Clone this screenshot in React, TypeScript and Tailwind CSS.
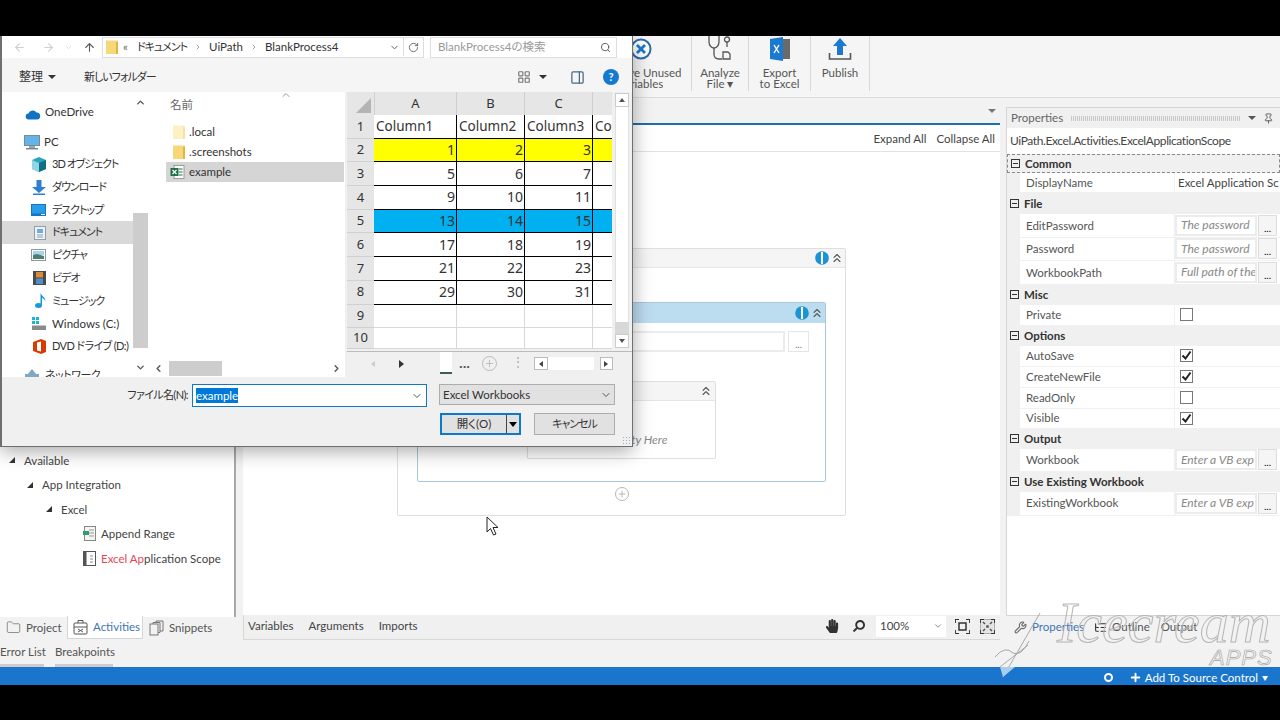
import React from 'react';
import {
  ArrowLeft, ArrowRight, ArrowUp, ChevronDown, ChevronUp, ChevronLeft, ChevronRight, ChevronsUp,
  RotateCw, Search, Folder, Wrench, Plus, Pin, PanelRight, LayoutGrid, ListTree,
} from 'lucide-react';
import { FaHandPaper, FaSearch } from 'react-icons/fa';

const FolderIcon = ({ light = false }: { light?: boolean }) => (
  <svg width="14" height="14" viewBox="0 0 14 14" className="shrink-0">
    <rect x="1" y="0.5" width="12" height="13.5" fill={light ? '#fdf0c4' : '#f6d878'} />
    <rect x="11" y="2" width="2" height="12" fill={light ? '#f4e2a6' : '#e0b545'} />
  </svg>
);

const ExcelIcon = () => (
  <svg width="15" height="14" viewBox="0 0 15 14" className="shrink-0">
    <rect x="4" y="0.5" width="10" height="13" fill="#fff" stroke="#9a9a9a" />
    <path d="M9 4h3.5M9 7h3.5M9 10h3.5" stroke="#1e7145" />
    <rect x="0.5" y="3" width="8" height="8" fill="#1e7145" />
    <path d="M2.5 5l4 4M6.5 5l-4 4" stroke="#fff" strokeWidth="1.2" />
  </svg>
);

const NavIcon = ({ kind }: { kind: string }) => {
  if (kind === 'cloud')
    return (
      <svg width="16" height="11" viewBox="0 0 16 11"><path d="M4 10.5a3 3 0 0 1-.6-6A4.5 4.5 0 0 1 11.5 3.6 3.5 3.5 0 0 1 12.5 10.5z" fill="#0f72c4" /></svg>
    );
  if (kind === 'pc')
    return (
      <svg width="16" height="15" viewBox="0 0 16 15"><rect x="0.5" y="0.5" width="15" height="10" fill="#63b3e8" stroke="#7a8a96" /><rect x="5" y="11" width="6" height="2" fill="#9aa5ad" /><rect x="2" y="13" width="12" height="1.5" fill="#7a8a96" /></svg>
    );
  if (kind === '3d')
    return (
      <svg width="14" height="15" viewBox="0 0 14 15"><path d="M7 0l7 3v9l-7 3-7-3V3z" fill="#2aa5bd" /><path d="M7 6l7-3v9l-7 3z" fill="#0f6f86" /><path d="M0 3l7 3v9l-7-3z" fill="#8fd6e4" /></svg>
    );
  if (kind === 'down')
    return (
      <svg width="14" height="15" viewBox="0 0 14 15"><path d="M4.5 0h5v7H14l-7 6-7-6h4.500z" fill="#2f7fd1" /><rect x="1" y="13.500" width="12" height="1.500" fill="#2f7fd1" /></svg>
    );
  if (kind === 'desk')
    return (
      <svg width="15" height="12" viewBox="0 0 15 12"><rect width="15" height="12" fill="#0f76c9" /><rect x="1" y="1" width="13" height="8.500" fill="#2a9be6" /><rect x="10" y="10" width="4" height="1" fill="#fff" /></svg>
    );
  if (kind === 'doc')
    return (
      <svg width="12" height="14" viewBox="0 0 12 14"><rect x="0.500" y="0.500" width="11" height="13" fill="#eef2f5" stroke="#8fa0ac" /><rect x="3" y="3" width="6" height="4" fill="#6aaedb" /><path d="M3 9h6M3 11h6" stroke="#8fa0ac" /></svg>
    );
  if (kind === 'pic')
    return (
      <svg width="15" height="12" viewBox="0 0 15 12"><rect x="0.500" y="0.500" width="14" height="11" fill="#fff" stroke="#8a9aa5" /><rect x="2" y="2" width="11" height="4" fill="#a9d4ee" /><path d="M2 6l4-1 7 2v3H2z" fill="#4f7f6a" /></svg>
    );
  if (kind === 'vid')
    return (
      <svg width="13" height="14" viewBox="0 0 13 14"><rect width="13" height="14" fill="#4a4a4a" /><rect x="3" y="1" width="7" height="5.500" fill="#d98a3a" /><rect x="3" y="7.500" width="7" height="5.500" fill="#4f8fc9" /></svg>
    );
  if (kind === 'music')
    return (
      <svg width="11" height="15" viewBox="0 0 11 15"><ellipse cx="3.500" cy="12.500" rx="3.500" ry="2.500" fill="#1b9ad6" /><path d="M5.500 12V0c1 3 5 4 5 8-1-2-3-3-3.500-3v7z" fill="#1b9ad6" /></svg>
    );
  if (kind === 'win')
    return (
      <svg width="14" height="13" viewBox="0 0 14 13"><rect x="0" y="0" width="3" height="3" fill="#19b5d8" /><rect x="4" y="0" width="3" height="3" fill="#19b5d8" /><rect x="0" y="4" width="3" height="3" fill="#19b5d8" /><rect x="4" y="4" width="3" height="3" fill="#19b5d8" /><rect x="0" y="8.500" width="14" height="4.500" fill="#8a8a8a" /></svg>
    );
  if (kind === 'dvd')
    return (
      <svg width="13" height="15" viewBox="0 0 13 15"><path d="M0 3l8-3 5 2v11l-5 2-8-3z" fill="#d83b01" /><path d="M8 2.500L4 3.500v8l4 1z" fill="#fff" /></svg>
    );
  return (
    <svg width="16" height="13" viewBox="0 0 16 13"><path d="M8 0l4 5h3v6H1V5h3z" fill="#7fa7c4" /></svg>
  );
};

const FitIcon = ({ dots = false }: { dots?: boolean }) => (
  <svg width="15" height="15" viewBox="0 0 15 15">
    <rect x="0" y="0" width="15" height="15" fill={dots ? '#e4e4e4' : 'none'} stroke={dots ? '#777' : 'none'} />
    <path d="M0 4V0h4M11 0h4v4M15 11v4h-4M4 15H0v-4" fill="none" stroke="#333" strokeWidth="1.800" />
    {dots
      ? <path d="M3 3l2 2M12 3l-2 2M3 12l2-2M12 12l-2-2M7 7h1v1H7z" stroke="#555" strokeWidth="1.500" />
      : <rect x="4" y="4" width="7" height="7" fill="none" stroke="#333" strokeWidth="1.500" />}
  </svg>
);

const navItems = [
  { kind: '3d', label: '3D オブジェクト', cls: 'text-[11px] tracking-[-1px]' },
  { kind: 'down', label: 'ダウンロード', cls: 'text-[11px] tracking-[-1px]' },
  { kind: 'desk', label: 'デスクトップ', cls: 'text-[11px] tracking-[-1px]' },
  { kind: 'doc', label: 'ドキュメント', cls: 'text-[11px] tracking-[-1px]', selected: true },
  { kind: 'pic', label: 'ピクチャ', cls: 'text-[11px] tracking-[-1px]' },
  { kind: 'vid', label: 'ビデオ', cls: 'text-[11px] tracking-[-1px]' },
  { kind: 'music', label: 'ミュージック', cls: 'text-[11px] tracking-[-1px]' },
  { kind: 'win', label: 'Windows (C:)', cls: 'text-[11.5px]' },
  { kind: 'dvd', label: 'DVD ドライブ (D:)', cls: 'text-[11px] tracking-[-0.6px]' },
];

const sheetRows = [
  { n: 1, cells: ['Column1', 'Column2', 'Column3', 'Co'], head: true, bg: 'bg-white', line: 'border-black' },
  { n: 2, cells: ['1', '2', '3', ''], bg: 'bg-[#ffff00]', line: 'border-black' },
  { n: 3, cells: ['5', '6', '7', ''], bg: 'bg-white', line: 'border-black' },
  { n: 4, cells: ['9', '10', '11', ''], bg: 'bg-white', line: 'border-black' },
  { n: 5, cells: ['13', '14', '15', ''], bg: 'bg-[#00b0f0]', line: 'border-black' },
  { n: 6, cells: ['17', '18', '19', ''], bg: 'bg-white', line: 'border-black' },
  { n: 7, cells: ['21', '22', '23', ''], bg: 'bg-white', line: 'border-black' },
  { n: 8, cells: ['29', '30', '31', ''], bg: 'bg-white', line: 'border-black' },
  { n: 9, cells: ['', '', '', ''], bg: 'bg-white', line: 'border-[#d8d8d8]', empty: true },
  { n: 10, cells: ['', '', '', ''], bg: 'bg-white', line: 'border-[#d8d8d8]', empty: true },
];

const ExcelSheet = () => (
  <div className="w-[285px] flex flex-col bg-[#f0f0f0] text-[14px] text-[#333] font-['Noto_Sans','Noto_Sans_CJK_JP',sans-serif]">
    <div className="flex flex-1 min-h-0">
      <div className="w-[265px]">
        <div className="grid grid-cols-[27px_82px_68px_68px_20px] h-[23px] bg-[#e6e6e6] text-[13px]">
          <div className="flex items-end justify-end pr-[3px] pb-[2px]">
            <div className="w-0 h-0 border-l-[15px] border-l-transparent border-b-[15px] border-b-[#b4b4b4]" />
          </div>
          {['A', 'B', 'C', ''].map((c, i) => (
            <div key={i} className="flex items-center justify-center border-l border-[#cfcfcf]">{c}</div>
          ))}
        </div>
        {sheetRows.map((r) => (
          <div key={r.n} className={`grid grid-cols-[27px_82px_68px_68px_20px] ${r.n === 10 ? 'h-[21px]' : 'h-[23.7px]'}`}>
            <div className="bg-[#e6e6e6] flex items-center justify-center text-[13px] border-b border-[#d0d0d0]">{r.n}</div>
            {r.cells.map((c, i) => (
              <div
                key={i}
                className={`${r.bg} ${r.line} border-b flex items-center overflow-hidden leading-none ${i > 0 ? 'border-l' : ''} ${r.head ? 'justify-start pl-[2px] text-[13.5px]' : 'justify-end pr-[1px]'}`}
              >
                {c}
              </div>
            ))}
          </div>
        ))}
      </div>
      <div className="ml-[3px] w-[14px] flex flex-col items-center pt-[1px] bg-[#eeeeee] h-[256px]">
        <div className="w-[14px] h-[14px] bg-white border border-[#cccccc] flex items-center justify-center"><div className="w-0 h-0 border-x-[3px] border-x-transparent border-b-[4px] border-b-[#555]" /></div>
        <div className="w-[14px] flex-1 bg-white border-x border-[#e0e0e0]" />
        <div className="w-[14px] h-[12px] bg-[#d8d8d8]" />
        <div className="w-[14px] h-[14px] bg-white border border-[#cccccc] flex items-center justify-center"><div className="w-0 h-0 border-x-[3px] border-x-transparent border-t-[4px] border-t-[#555]" /></div>
      </div>
    </div>
    <div className="h-[26px] flex items-start text-[#555] shrink-0 border-t border-[#bbbbbb]">
      <div className="w-[24px]" />
      <span className="w-0 h-0 mt-[9px] border-y-[3px] border-y-transparent border-r-[4px] border-r-[#cccccc]" />
      <span className="w-0 h-0 ml-[24px] mt-[8px] border-y-[4px] border-y-transparent border-l-[5px] border-l-[#333]" />
      <div className="ml-[36px] w-[12px] h-[22px] bg-white border-b-2 border-[#3f5f4f]" />
      <span className="ml-[7px] mt-[1px] text-[13px] font-bold leading-[20px]">...</span>
      <div className="ml-[12px] mt-[4px] w-[15px] h-[15px] rounded-full border border-[#bbbbbb] flex items-center justify-center"><Plus size={11} className="text-[#bbbbbb]" /></div>
      <span className="ml-[15px] mt-[2px] text-[#aaa] leading-[16px] text-[12px]">⋮</span>
      <div className="ml-[10px] mt-[5px] w-[14px] h-[13px] border border-[#bbb] bg-white flex items-center justify-center"><span className="w-0 h-0 border-y-[3px] border-y-transparent border-r-[4px] border-r-[#444]" /></div>
      <div className="mt-[5px] w-[46px] h-[13px] bg-white" />
      <div className="ml-[6px] mt-[5px] w-[13px] h-[13px] border border-[#bbb] bg-white flex items-center justify-center"><span className="w-0 h-0 border-y-[3px] border-y-transparent border-l-[4px] border-l-[#444]" /></div>
    </div>
  </div>
);

const FileDialog = () => (
  <div className="absolute left-0 top-[36px] z-10 w-[633px] h-[411px] bg-[#f0f0f0] border-l-2 border-r border-b border-[#6f6f6f] shadow-[0_4px_18px_rgba(0,0,0,0.35)] flex flex-col text-[11.5px] text-[#333] [font-feature-settings:'palt']">
    <div className="h-[22px] flex items-center bg-white shrink-0">
      <ArrowLeft size={13} className="ml-[11px] text-[#d0d0d0]" />
      <ArrowRight size={13} className="ml-[16px] text-[#d0d0d0]" />
      <ChevronDown size={9} className="ml-[9px] text-[#d0d0d0]" />
      <ArrowUp size={13} className="ml-[10px] text-[#555]" />
      <div className="ml-[6px] w-[322px] h-[21px] flex items-center border border-[#dddddd]">
        <span className="ml-[2px]"><FolderIcon /></span>
        <span className="ml-[4px] text-[#666]">«</span>
        <span className="ml-[9px] text-[11px] tracking-[-1px]">ドキュメント</span>
        <ChevronRight size={8} className="mx-[7px] text-[#777]" />
        <span>UiPath</span>
        <ChevronRight size={8} className="mx-[7px] text-[#777]" />
        <span>BlankProcess4</span>
        <ChevronDown size={11} className="ml-auto mr-[1px] text-[#555]" />
        <span className="w-px h-[18px] bg-[#dddddd] ml-[2px]" />
        <RotateCw size={11} className="mx-[4px] text-[#666]" />
      </div>
      <div className="ml-[6px] w-[187px] h-[21px] flex items-center border border-[#dddddd] pl-[7px] text-[#999]">
        BlankProcess4の検索
        <Search size={11} className="ml-auto mr-[5px] text-[#555]" />
      </div>
    </div>
    <div className="h-[34px] flex items-center shrink-0 pt-[4px] bg-[#f5f5f5] whitespace-nowrap">
      <span className="ml-[17px] shrink-0 text-[12px]">整理</span>
      <span className="ml-[5px] w-0 h-0 border-x-[4px] border-x-transparent border-t-[4px] border-t-[#333]" />
      <span className="ml-[28px] shrink-0 text-[11px] tracking-[-1px]">新しいフォルダー</span>
      <LayoutGrid size={14} className="ml-auto text-[#777]" />
      <span className="ml-[8px] w-0 h-0 border-x-[4px] border-x-transparent border-t-[4px] border-t-[#333]" />
      <PanelRight size={15} className="ml-[23px] text-[#4a6a85]" />
      <div className="ml-[18px] mr-[13px] w-[16px] h-[16px] rounded-full bg-[#1479d0] text-white flex items-center justify-center text-[11px] font-bold">?</div>
    </div>
    <div className="h-[285px] flex shrink-0 bg-white overflow-hidden">
      <div className="w-[131px] shrink-0 overflow-hidden relative">
        <div className="h-[29px] flex items-end pl-[23px] gap-[3px] pb-[1px]"><NavIcon kind="cloud" /><span className="ml-[1px]">OneDrive</span></div>
        <div className="h-[29px] flex items-end pl-[22px] gap-[4px] mb-[3px]"><NavIcon kind="pc" /><span>PC</span></div>
        {navItems.map((n) => (
          <div key={n.label} className={`h-[22.75px] flex items-center ${n.selected ? 'bg-[#d9d9d9]' : ''}`}>
            <span className="w-[44px] flex justify-end shrink-0"><NavIcon kind={n.kind} /></span>
            <span className={`ml-[6px] whitespace-nowrap ${n.cls}`}>{n.label}</span>
          </div>
        ))}
        <div className="mt-[9px] flex items-center pl-[22px] gap-[5px] text-[11px] tracking-[-0.5px]"><NavIcon kind="net" /><span>ネットワーク</span></div>
      </div>
      <div className="w-[15px] shrink-0 flex flex-col items-center bg-white">
        <ChevronUp size={11} strokeWidth={3} className="mt-[5px] text-[#555]" />
        <div className="w-[15px] h-[135px] mt-[105px] bg-[#cdcdcd]" />
        <ChevronDown size={11} strokeWidth={3} className="mt-[14px] text-[#555]" />
      </div>
      <div className="w-[197px] shrink-0 flex flex-col">
        <div className="h-[30px] relative pl-[22px] pt-[4px] text-[#666]">
          名前
          <ChevronUp size={12} className="absolute left-[132px] -top-[3px] text-[#999]" />
        </div>
        <div className="h-[20px] flex items-center pl-[24px] gap-[3px]"><FolderIcon light /><span>.local</span></div>
        <div className="h-[20px] flex items-center pl-[24px] gap-[3px]"><FolderIcon /><span>.screenshots</span></div>
        <div className="h-[20px] ml-[18px] mr-[1px] pl-[4px] flex items-center gap-[4px] bg-[#d5d5d5]"><ExcelIcon /><span>example</span></div>
        <div className="flex-1" />
        <div className="h-[16px] flex items-center pl-[5px] mb-[1px]">
          <ChevronLeft size={11} strokeWidth={3} className="text-[#555]" />
          <div className="ml-[5px] w-[53px] h-[15px] bg-[#cdcdcd]" />
          <ChevronRight size={11} strokeWidth={3} className="ml-[109px] text-[#555]" />
        </div>
      </div>
      <div className="w-[2px] bg-[#f0f0f0]" />
      <ExcelSheet />
    </div>
    <div className="flex-1 relative">
      <div className="flex items-start pt-[7px]">
        <span className="w-[186px] text-right mt-[3px] whitespace-nowrap text-[11px] tracking-[-0.6px]">ファイル名(N):</span>
        <div className="ml-[4px] w-[235px] h-[23px] bg-white border border-[#0f78c8] flex items-center pl-[3px]">
          <span className="bg-[#0078d7] text-white leading-[15px]">example</span>
          <ChevronDown size={12} className="ml-auto mr-[3px] text-[#555]" />
        </div>
        <div className="ml-[12px] w-[176px] h-[21px] bg-[#e1e1e1] border border-[#adadad] flex items-center pl-[3px]">
          Excel Workbooks
          <ChevronDown size={12} className="ml-auto mr-[2px] text-[#555]" />
        </div>
      </div>
      <div className="flex pl-[438px] mt-[6px]">
        <div className="w-[81px] h-[22px] bg-[#e1e1e1] border-2 border-[#0f78c8] flex items-center">
          <span className="flex-1 text-center">開く(O)</span>
          <span className="w-px h-[18px] bg-[#444]" />
          <span className="mx-[2px] w-0 h-0 border-x-[4px] border-x-transparent border-t-[5px] border-t-black" />
        </div>
        <div className="ml-[13px] w-[81px] h-[22px] bg-[#e1e1e1] border border-[#adadad] flex items-center justify-center text-[11px] tracking-[-1px]">キャンセル</div>
      </div>
      <div className="absolute right-[2px] bottom-[2px] w-[8px] h-[8px] bg-[radial-gradient(#aaaaaa_1px,transparent_1px)] bg-[length:3px_3px]" />
    </div>
  </div>
);

const RibbonItem = ({ w, icon, lines, sep = true }: { w: string; icon: React.ReactNode; lines: string[]; sep?: boolean }) => (
  <div className={`${w} h-[55px] flex flex-col items-center shrink-0 ${sep ? 'border-r border-[#d8d8d8]' : ''}`}>
    <div className="h-[26px] flex items-center justify-center">{icon}</div>
    <div className="mt-[6px] text-center leading-[10.5px] text-[11.5px] text-[#555]">
      {lines.map((l) => <div key={l} className="whitespace-nowrap">{l}</div>)}
    </div>
  </div>
);

const Ribbon = () => (
  <div className="h-[62px] shrink-0 bg-[#f5f5f5] border-b border-[#dcdcdc] flex items-start pl-[590px]">
    <RibbonItem
      w="w-[102px]"
      lines={['Remove Unused', 'Variables']}
      icon={
        <svg width="22" height="24" viewBox="0 0 22 24"><circle cx="11" cy="12" r="9.500" fill="#fff" stroke="#2b6cb0" strokeWidth="2" /><path d="M7 8l8 8M15 8l-8 8" stroke="#1b79d0" strokeWidth="2.800" /></svg>
      }
    />
    <RibbonItem
      w="w-[57px]"
      lines={['Analyze', 'File ▾']}
      icon={
        <svg width="26" height="26" viewBox="0 0 26 26" fill="none" stroke="#555" strokeWidth="1.300"><path d="M2 0v6c0 4 3 6 5 6s5-2 5-6V0" /><path d="M7 12v6c0 3 2 5 5 5h3" /><circle cx="20" cy="3.500" r="2.500" /><path d="M20 6v5" /><path d="M16 23v-7h5l2 2v5z" /></svg>
      }
    />
    <RibbonItem
      w="w-[62px]"
      lines={['Export', 'to Excel']}
      icon={
        <svg width="20" height="24" viewBox="0 0 20 24"><rect x="13" y="2" width="7" height="20" fill="#6a6a6a" /><path d="M0 2l13-2v24L0 22z" fill="#1b79d0" /><path d="M4 8l5 8M9 8l-5 8" stroke="#fff" strokeWidth="1.400" /></svg>
      }
    />
    <RibbonItem
      w="w-[59px]"
      lines={['Publish']}
      icon={
        <svg width="24" height="24" viewBox="0 0 24 24"><path d="M12 1l7 8h-4v9H9V9H5z" fill="#1b79d0" /><path d="M1.500 16v6h21v-6" fill="none" stroke="#555" strokeWidth="1.600" /></svg>
      }
    />
  </div>
);

const LeftPanel = () => (
  <div className="w-[236px] shrink-0 flex flex-col">
    <div className="flex-1 bg-white border-r-2 border-[#a8a8a8] pt-[350px] text-[11.5px] text-[#444]">
      <div className="h-[24.500px] flex items-center pl-[9px] gap-[9px]"><span className="w-0 h-0 border-l-[6px] border-l-transparent border-b-[6px] border-b-[#333]" /><span>Available</span></div>
      <div className="h-[24.500px] flex items-center pl-[27px] gap-[9px]"><span className="w-0 h-0 border-l-[6px] border-l-transparent border-b-[6px] border-b-[#333]" /><span>App Integration</span></div>
      <div className="h-[24.500px] flex items-center pl-[46px] gap-[9px]"><span className="w-0 h-0 border-l-[6px] border-l-transparent border-b-[6px] border-b-[#333]" /><span>Excel</span></div>
      <div className="h-[24.500px] flex items-center pl-[83px] gap-[5px]">
        <svg width="13" height="15" viewBox="0 0 13 15"><rect x="1.500" y="0.500" width="11" height="14" fill="#f4f4f4" stroke="#888" /><path d="M6 4h5M6 7h5M6 10h5" stroke="#999" /><rect x="0" y="5" width="6" height="4" fill="#2f9e6e" /></svg>
        <span>Append Range</span>
      </div>
      <div className="h-[24.500px] flex items-center pl-[83px] gap-[5px]">
        <svg width="13" height="15" viewBox="0 0 13 15"><rect x="0.500" y="0.500" width="12" height="14" fill="#fff" stroke="#555" /><rect x="0.500" y="0.500" width="3" height="14" fill="#555" /><path d="M7 5h3M7 8h3M7 11h3" stroke="#888" /></svg>
        <span><span className="text-[#e8464f]">Excel Ap</span>plication Scope</span>
      </div>
    </div>
    <div className="h-[23px] shrink-0 flex items-center pb-[2px] text-[11.5px] text-[#555]">
      <div className="h-[23px] flex items-center pl-[6px] w-[67px] gap-[5px]"><Folder size={15} strokeWidth={1} /><span>Project</span></div>
      <div className="h-[23px] flex items-center pl-[5px] w-[76px] gap-[5px] bg-white border-x border-b border-[#d5d5d5] text-[#3f74b5]">
        <svg width="15" height="16" viewBox="0 0 15 16" fill="none" stroke="#555"><rect x="1" y="4" width="13" height="11" rx="1" /><path d="M5 4V1.500h5V4M1 8h13M5 10l5 3M10 10l-5 3" /></svg>
        <span>Activities</span>
      </div>
      <div className="h-[23px] flex items-center pl-[6px] gap-[5px]">
        <svg width="15" height="16" viewBox="0 0 15 16" fill="none" stroke="#777"><rect x="1" y="4" width="8" height="11" /><path d="M4 4V2.500h7v10H9M7 2.500V1h7v10h-3" /></svg>
        <span>Snippets</span>
      </div>
    </div>
  </div>
);

const Circle = () => (
  <div className="w-[14px] h-[14px] rounded-full border border-[#b8b8b8] flex items-center justify-center"><Plus size={10} className="text-[#aaaaaa]" /></div>
);

const InfoDot = () => (
  <svg width="14" height="14" viewBox="0 0 14 14"><circle cx="7" cy="7" r="6.800" fill="#1d93d2" /><rect x="6" y="1" width="2" height="12" fill="#fff" /></svg>
);

const Canvas = () => (
  <div className="flex-1 bg-white pl-[154px] pt-[96px] text-[#777]">
    <div className="w-[449px] h-[268px] border border-[#dedede] rounded-[2px] flex flex-col">
      <div className="h-[19px] bg-[#f5f5f5] border-b border-[#e5e5e5] flex items-center justify-end pr-[1px] gap-[1px]">
        <InfoDot /><ChevronsUp size={14} className="text-[#555]" />
      </div>
      <div className="pl-[19px] pt-[34px]">
        <div className="w-[409px] h-[180px] border border-[#a9c7dc] rounded-[2px] flex flex-col">
          <div className="h-[20px] bg-[#bcdcf0] flex items-center justify-end pr-[1px] gap-[1px]">
            <InfoDot /><ChevronsUp size={14} className="text-[#555]" />
          </div>
          <div className="flex pt-[8px] pl-[180px]">
            <div className="w-[187px] h-[21px] border-2 border-[#ececec]" />
            <div className="ml-[3px] w-[21px] h-[21px] border border-[#e5e5e5] flex items-end justify-center text-[10px] leading-[14px]">...</div>
          </div>
          <div className="pl-[109px] pt-[29px]">
            <div className="w-[189px] h-[78px] border border-[#dedede] rounded-[2px]">
              <div className="h-[19px] bg-[#f5f5f5] border-b border-[#e5e5e5] flex items-center justify-end pr-[2px]"><ChevronsUp size={14} className="text-[#555]" /></div>
              <div className="pt-[30px] text-center italic text-[12px] text-[#888]">Drop Activity Here</div>
            </div>
          </div>
        </div>
        <div className="w-[409px] flex justify-center mt-[5px]"><Circle /></div>
      </div>
    </div>
  </div>
);

const Designer = () => (
  <div className="w-[757px] ml-[7px] shrink-0 flex flex-col">
    <div className="h-[25px] shrink-0 flex items-center justify-end pr-[4px]"><span className="w-0 h-0 border-x-[4px] border-x-transparent border-t-[4px] border-t-[#777]" /></div>
    <div className="h-[2px] shrink-0 bg-[#1e6ea8]" />
    <div className="h-[27px] shrink-0 bg-white border-b border-[#e2e2e2] flex items-center justify-end pr-[5px] pt-[1px] gap-[10px] text-[11.5px] text-[#444]">
      <span>Expand All</span><span>Collapse All</span>
    </div>
    <Canvas />
    <div className="h-[25px] shrink-0 border-l border-b border-[#d8d8d8] bg-[#f0f0f0] flex items-center pl-[4px] pb-[2px] text-[11.5px] text-[#444]">
      <span>Variables</span>
      <span className="ml-[15px]">Arguments</span>
      <span className="ml-[15px]">Imports</span>
      <FaHandPaper size={14} className="ml-auto text-[#333]" />
      <FaSearch size={12} className="ml-[14px] text-[#333] -scale-x-100" />
      <div className="ml-[11px] w-[70px] h-[21px] bg-white flex items-center pl-[4px]">
        100%
        <ChevronDown size={10} className="ml-auto mr-[3px] text-[#777]" />
      </div>
      <span className="ml-[9px]"><FitIcon /></span>
      <span className="ml-[10px] mr-[5px]"><FitIcon dots /></span>
    </div>
  </div>
);

type Row =
  | { type: 'group'; label: string; h: string; dashed?: boolean }
  | { type: 'text'; label: string; value: string; h: string }
  | { type: 'input'; label: string; hint: string; h: string }
  | { type: 'check'; label: string; checked: boolean; h: string };

const rows: Row[] = [
  { type: 'group', label: 'Common', h: 'h-[19px]', dashed: true },
  { type: 'text', label: 'DisplayName', value: 'Excel Application Sc', h: 'h-[20px]' },
  { type: 'group', label: 'File', h: 'h-[21px]' },
  { type: 'input', label: 'EditPassword', hint: 'The password', h: 'h-[23.500px]' },
  { type: 'input', label: 'Password', hint: 'The password', h: 'h-[23.500px]' },
  { type: 'input', label: 'WorkbookPath', hint: 'Full path of the', h: 'h-[23.500px]' },
  { type: 'group', label: 'Misc', h: 'h-[20px]' },
  { type: 'check', label: 'Private', checked: false, h: 'h-[21px]' },
  { type: 'group', label: 'Options', h: 'h-[20px]' },
  { type: 'check', label: 'AutoSave', checked: true, h: 'h-[21px]' },
  { type: 'check', label: 'CreateNewFile', checked: true, h: 'h-[21px]' },
  { type: 'check', label: 'ReadOnly', checked: false, h: 'h-[21px]' },
  { type: 'check', label: 'Visible', checked: true, h: 'h-[20px]' },
  { type: 'group', label: 'Output', h: 'h-[20px]' },
  { type: 'input', label: 'Workbook', hint: 'Enter a VB exp', h: 'h-[23px]' },
  { type: 'group', label: 'Use Existing Workbook', h: 'h-[20px]' },
  { type: 'input', label: 'ExistingWorkbook', hint: 'Enter a VB exp', h: 'h-[24px]' },
];

const PropRow = ({ row }: { row: Row }) => {
  if (row.type === 'group') {
    return (
      <div className={`${row.h} flex items-center bg-[#f0f0f0] font-bold text-[#333] ${row.dashed ? 'border border-dashed border-[#888]' : ''}`}>
        <span className="ml-[3px] w-[9px] h-[9px] border border-[#333] flex items-center justify-center shrink-0"><span className="w-[5px] h-px bg-[#333]" /></span>
        <span className="ml-[5px]">{row.label}</span>
      </div>
    );
  }
  return (
    <div className={`${row.h} flex bg-[#f0f0f0]`}>
      <div className="w-[13px] shrink-0" />
      <div className="flex-1 flex bg-white border-b border-[#f0f0f0] min-w-0">
        <div className="w-[155px] shrink-0 pl-[6px] flex items-center border-r border-[#f0f0f0] text-[#555]">{row.label}</div>
        {row.type === 'text' && <div className="pl-[3px] flex-1 min-w-0 flex items-center whitespace-nowrap overflow-hidden text-[#444]">{row.value}</div>}
        {row.type === 'check' && (
          <div className="pl-[5px] flex items-center">
            <div className="w-[13px] h-[13px] border border-[#777] flex items-center justify-center">
              {row.checked && <svg width="11" height="11" viewBox="0 0 11 11"><path d="M1.500 5.500l3 3 5-7" fill="none" stroke="#222" strokeWidth="2" /></svg>}
            </div>
          </div>
        )}
        {row.type === 'input' && (
          <div className="flex items-center">
            <div className="w-[82px] h-[21px] border-2 border-[#ececec] pl-[4px] italic text-[12px] text-[#888] flex items-center overflow-hidden whitespace-nowrap">{row.hint}</div>
            <div className="ml-[1px] w-[19px] h-[21px] border border-[#dddddd] bg-[#f5f5f5] flex items-end justify-center text-[10px] leading-[14px]">...</div>
          </div>
        )}
      </div>
    </div>
  );
};

const PropertiesPanel = () => (
  <div className="flex-1 ml-[6px] flex flex-col text-[11.5px] min-w-0">
    <div className="h-[9px] shrink-0" />
    <div className="flex-1 flex flex-col border-t border-l border-[#d5d5d5]">
      <div className="h-[20px] shrink-0 flex items-center pl-[4px] pr-[6px] text-[#666] bg-[#f0f0f0]">
        Properties
        <div className="ml-[8px] flex-1 h-[5px] bg-[repeating-linear-gradient(90deg,#c8c8c8_0,#c8c8c8_1px,transparent_1px,transparent_2px)]" />
        <span className="ml-[7px] w-0 h-0 border-x-[4px] border-x-transparent border-t-[4px] border-t-[#555]" />
        <Pin size={11} className="ml-[7px] text-[#555]" />
      </div>
      <div className="h-[26px] shrink-0 flex items-center pl-[3px] text-[12px] tracking-[-0.4px] text-[#444] bg-white">UiPath.Excel.Activities.ExcelApplicationScope</div>
      {rows.map((r) => <PropRow key={r.label} row={r} />)}
      <div className="flex-1 bg-white" />
    </div>
    <div className="h-[25px] shrink-0 flex items-center pl-[8px] pb-[2px] text-[#555] border-t border-[#d5d5d5]">
      <Wrench size={13} className="text-[#666]" />
      <span className="ml-[5px] text-[#3f74b5]">Properties</span>
      <ListTree size={13} className="ml-[10px] text-[#333]" />
      <span className="ml-[5px]">Outline</span>
      <span className="ml-[11px]">Output</span>
    </div>
  </div>
);

const Watermark = () => (
  <div className="absolute left-[995px] top-[585px] z-20 w-[285px] h-[100px] pointer-events-none">
    <svg width="285" height="100" viewBox="0 0 285 100" className="absolute inset-0">
      <path d="M8 92 L45 28 M5 82 L33 60" fill="none" stroke="#a8a8a8" />
      <path d="M0 72 Q10 60 18 68 Q26 72 34 56" fill="none" stroke="#a8a8a8" />
      <path d="M8 92 L5 82 L20 82 Z" fill="#a9cdee" />
    </svg>
    <span className="absolute left-[62px] top-[9px] italic text-[58px] leading-none text-transparent font-['Liberation_Serif',serif] whitespace-nowrap [-webkit-text-stroke:1px_#b5b5b5]">Icecream</span>
    <span className="absolute left-[215px] top-[62px] italic text-[22px] leading-none text-transparent font-['Liberation_Sans',sans-serif] tracking-[1px] [-webkit-text-stroke:0.6px_#a0a0a0]">APPS</span>
  </div>
);

const Cursor = () => (
  <svg width="13" height="20" viewBox="0 0 13 20" className="absolute left-[486px] top-[516px] z-20">
    <path d="M1 1v15l3.500-3.500 3 6.500 2.500-1-3-6.500h5z" fill="#fff" stroke="#222" />
  </svg>
);

export default function App() {
  return (
    <div className="relative w-[1280px] h-[720px] overflow-hidden bg-black text-[12px] font-['Lato','Noto_Sans_CJK_JP',sans-serif]">
      <div className="h-[36px]" />
      <div className="h-[649px] flex flex-col bg-[#f2f2f2]">
        <Ribbon />
        <div className="h-[542px] shrink-0 flex">
          <LeftPanel />
          <Designer />
          <PropertiesPanel />
        </div>
        <div className="h-[27px] shrink-0 flex items-start text-[11.5px] text-[#555] whitespace-nowrap">
          <div className="w-[44px] h-full flex flex-col justify-between">
            <span className="leading-[24px]">Error List</span>
            <div className="h-[6px] bg-[#cccccc]" />
          </div>
          <div className="ml-[11px] w-[58px] h-full flex flex-col justify-between">
            <span className="leading-[24px]">Breakpoints</span>
            <div className="h-[6px] bg-[#cccccc]" />
          </div>
        </div>
        <div className="h-[18px] shrink-0 bg-[#1976cc] flex items-center justify-end pr-[12px] pt-[3px] text-white text-[11.5px]">
          <span className="w-[9px] h-[9px] rounded-full border-2 border-white" />
          <Plus size={13} strokeWidth={3.500} className="ml-[16px]" />
          <span className="ml-[3px]">Add To Source Control</span>
          <span className="ml-[4px] text-[6px]">▼</span>
        </div>
      </div>
      <FileDialog />
      <Cursor />
      <Watermark />
    </div>
  );
}
